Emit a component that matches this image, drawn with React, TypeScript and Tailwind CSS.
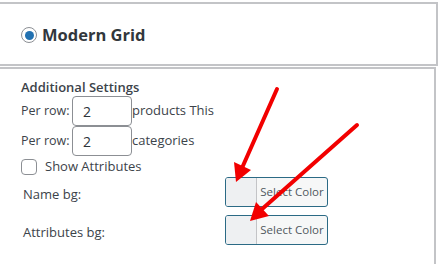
import React from 'react'

const font = { fontFamily: '"Open Sans", "Noto Sans", "Liberation Sans", sans-serif' }

function ColorButton() {
	return (
		<button className="flex h-[30px] w-[103px] overflow-hidden rounded-[3px] border border-[#2b6a85] bg-[#f6f7f7]">
			<span className="h-full w-[31px] border-r border-[#c3c4c7] bg-[#eef0f2]" />
			<span className="flex h-full flex-1 items-center justify-center whitespace-nowrap text-[11.5px] text-[#50575e]">
				Select Color
			</span>
		</button>
	)
}

export default function App() {
	return (
		<div className="relative h-[264px] w-[439px] overflow-hidden bg-white text-[#3c434a]" style={font}>
			{/* Layout box */}
			<div className="mt-[2px] flex h-[64px] w-[438px] items-center gap-[5px] border-y-2 border-r-2 border-[#c3c4c7] pl-[21px] pt-[2px]">
				<span className="flex h-[16px] w-[16px] items-center justify-center rounded-full border border-[#8c8f94] bg-white">
					<span className="h-[9px] w-[9px] rounded-full bg-[#2271b1]" />
				</span>
				<span className="text-[16.5px] font-bold text-[#32373c]">Modern Grid</span>
			</div>

			{/* Settings box */}
			<div className="mt-[1px] h-[200px] w-[436px] border-t-2 border-r-2 border-[#c3c4c7] pl-[21px] pt-[9px]">
				<div className="text-[13px] font-semibold leading-[18px] text-[#3c434a]">Additional Settings</div>

				<div className="flex flex-col whitespace-nowrap text-[13px]">
					<div className="flex h-[30px] items-center">
						<span className="w-[51px] shrink-0 text-[12.5px]">Per row:</span>
						<input
							defaultValue="2"
							className="h-[30px] w-[60px] shrink-0 rounded-[4px] border border-[#8c8f94] px-[10px] text-[14px] text-[#2c3338] outline-none"
						/>
						<span>products This</span>
					</div>
					<div className="flex h-[30px] items-center">
						<span className="w-[51px] shrink-0 text-[12.5px]">Per row:</span>
						<input
							defaultValue="2"
							className="h-[30px] w-[60px] shrink-0 rounded-[4px] border border-[#8c8f94] px-[10px] text-[14px] text-[#2c3338] outline-none"
						/>
						<span>categories</span>
					</div>
					<label className="mt-[2px] flex h-[18px] items-center gap-[8px]">
						<span className="h-[16px] w-[16px] rounded-[4px] border border-[#8c8f94] bg-white" />
						<span>Show Attributes</span>
					</label>
				</div>

				<div className="mt-[1px] grid grid-cols-[202px_auto] gap-y-[8px] pl-[2px] text-[13px]">
					<div className="pt-[8px]">Name bg:</div>
					<ColorButton />
					<div className="pt-[8px]">Attributes bg:</div>
					<ColorButton />
				</div>
			</div>

			{/* annotation arrows */}
			<svg className="pointer-events-none absolute left-0 top-0" width="439" height="264">
				<g stroke="#f20000" strokeWidth="4" strokeLinecap="round" fill="#f20000">
					<line x1="277" y1="89" x2="242" y2="168" />
					<line x1="357" y1="125" x2="261" y2="210" />
				</g>
				<polygon points="236,182 234,162 251,170" fill="#f20000" />
				<polygon points="250,221 256,202 269,216" fill="#f20000" />
			</svg>
		</div>
	)
}
